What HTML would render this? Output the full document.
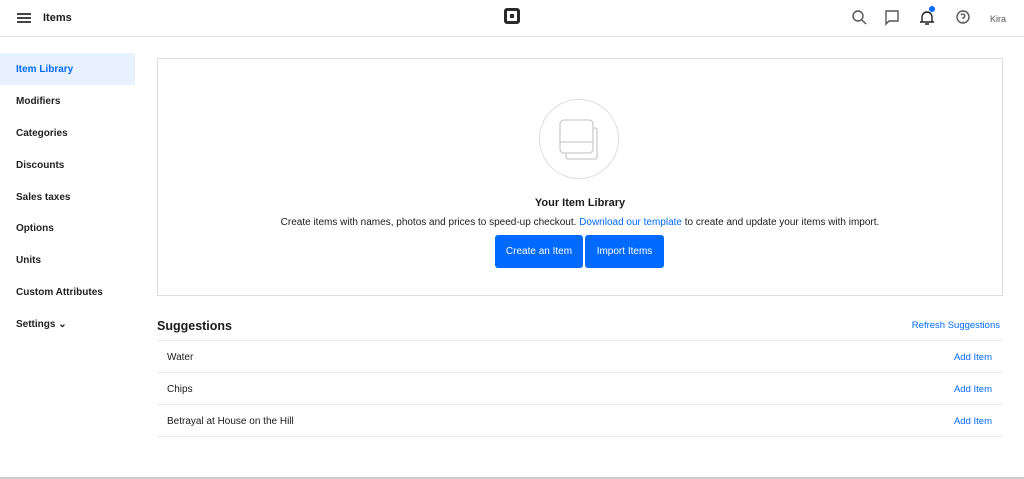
<!DOCTYPE html>
<html><head><style>
*{margin:0;padding:0;box-sizing:border-box}
body{width:1024px;height:479px;background:#fff;font-family:"Liberation Sans",sans-serif;color:#1a1a1a;position:relative;overflow:hidden}
.top{position:absolute;left:0;top:0;width:1024px;height:37px;border-bottom:1px solid #e2e2e2}
.abs{position:absolute}
.nav{position:absolute;left:0;font-size:10px;font-weight:bold;color:#222;padding-left:16px;width:135px;height:32px;line-height:34px}
a{color:#006aff;text-decoration:none}
.row{position:absolute;left:157px;width:845px;height:32px;border-bottom:1px solid #e8e8e8;font-size:10px;line-height:32px;padding-left:10px}
.row span{position:absolute;right:10px;color:#006aff;font-size:9.5px}
.btn{position:absolute;top:235px;height:33px;background:#006aff;color:#fff;font-size:10px;border-radius:3px;text-align:center;line-height:34px}
</style></head><body>
<div class="top">
<div class="abs" style="left:17px;top:13px;width:14px;height:2px;background:#444;box-shadow:0 4px 0 #444,0 8px 0 #444"></div>
<div class="abs" style="left:43px;top:12px;font-size:11px;font-weight:bold">Items</div>
<div class="abs" style="left:504px;top:8px;width:16px;height:16px;border:3px solid #2a2a2a;border-radius:3px"><div style="position:absolute;left:3px;top:3px;width:4px;height:4px;background:#2a2a2a"></div></div>
<svg class="abs" style="left:850px;top:9px" width="140" height="18" fill="none" stroke="#555" stroke-width="1.4">
<circle cx="8" cy="7" r="5"/><path d="M12 11l4 4"/>
<path d="M36 2h12v10h-9l-3 3z"/>
<path d="M72 13v-5a5 5 0 0 1 10 0v5h2h-14M75 15h4" stroke="#222"/>
<circle cx="113" cy="8" r="6"/><path d="M111 6a2 2 0 1 1 2 3v1M113 12v.5"/>
</svg>
<div class="abs" style="left:929px;top:6px;width:6px;height:6px;border-radius:50%;background:#006aff"></div>
<div class="abs" style="left:990px;top:14px;font-size:9px;color:#555">Kira</div>
</div>
<div class="nav" style="top:53px;background:#e8f1fe;color:#006aff">Item Library</div>
<div class="nav" style="top:85px">Modifiers</div>
<div class="nav" style="top:117px">Categories</div>
<div class="nav" style="top:149px">Discounts</div>
<div class="nav" style="top:181px">Sales taxes</div>
<div class="nav" style="top:212px">Options</div>
<div class="nav" style="top:244px">Units</div>
<div class="nav" style="top:276px">Custom Attributes</div>
<div class="nav" style="top:308px">Settings ⌄</div>
<div class="abs" style="left:157px;top:58px;width:846px;height:238px;border:1px solid #ddd"></div>
<div class="abs" style="left:539px;top:99px;width:80px;height:80px;border:1px solid #ddd;border-radius:50%"></div>
<svg class="abs" style="left:558px;top:118px" width="44" height="44" fill="none" stroke="#ccc" stroke-width="1.3"><rect x="2" y="2" width="33" height="33" rx="4"/><path d="M2 24h33M8 35v4a2 2 0 0 0 2 2h27a2 2 0 0 0 2-2v-27a2 2 0 0 0-2-2h-2"/></svg>
<div class="abs" style="left:0;width:1160px;top:197px;text-align:center;font-size:11px;font-weight:bold">Your Item Library</div>
<div class="abs" style="left:0;width:1160px;top:217px;text-align:center;font-size:10px">Create items with names, photos and prices to speed-up checkout. <a>Download our template</a> to create and update your items with import.</div>
<div class="btn" style="left:495px;width:88px">Create an Item</div>
<div class="btn" style="left:585px;width:79px">Import Items</div>
<div class="abs" style="left:157px;top:319px;font-size:12.5px;font-weight:bold">Suggestions</div>
<div class="abs" style="right:24px;top:320px;font-size:9.5px;color:#006aff">Refresh Suggestions</div>
<div class="abs" style="left:157px;top:340px;width:845px;border-top:1px solid #e8e8e8"></div>
<div class="row" style="top:341px;line-height:34px">Water<span>Add Item</span></div>
<div class="row" style="top:373px;line-height:34px">Chips<span>Add Item</span></div>
<div class="row" style="top:405px;line-height:34px">Betrayal at House on the Hill<span>Add Item</span></div>
<div class="abs" style="left:0;top:477px;width:1024px;height:2px;background:#ccc"></div>
</body></html>
